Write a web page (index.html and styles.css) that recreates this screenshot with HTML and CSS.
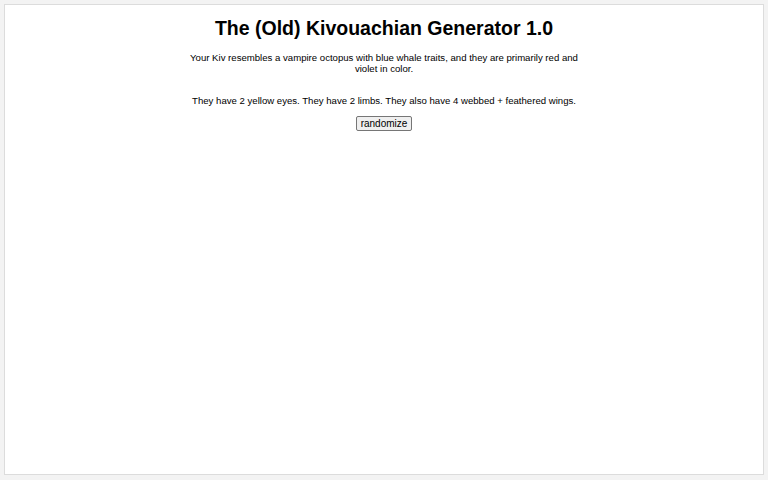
FILE: index.html
```html
<!DOCTYPE html>
<html>
<head>
<meta charset="utf-8">
<link rel="stylesheet" href="styles.css">
</head>
<body>
<div class="panel">
  <h1 class="title">The (Old) Kivouachian Generator 1.0</h1>
  <div class="content">
    <p class="desc">Your Kiv resembles a vampire octopus with blue whale traits, and they are primarily red and violet in color.</p>
    <p class="desc second">They have 2 yellow eyes. They have 2 limbs. They also have 4 webbed + feathered wings.</p>
    <button class="btn">randomize</button>
  </div>
</div>
</body>
</html>
```
FILE: styles.css
```css
html, body {
  margin: 0;
  padding: 0;
}
body {
  background: #f3f3f3;
  padding: 4px 4px 5px 4px;
  font-family: "Liberation Sans", Arial, sans-serif;
  color: #000;
}
.panel {
  background: #fff;
  border: 1px solid #dcdcdc;
  height: 471px;
  box-sizing: border-box;
  text-align: center;
}
.title {
  font-size: 19.5px;
  font-weight: bold;
  margin: 0;
  padding-top: 12px;
  line-height: 23px;
}
.content {
  width: 400px;
  margin: 0 auto;
}
.desc {
  font-size: 9.6px;
  line-height: 11px;
  margin: 12px 0 0 0;
}
.desc.second {
  margin-top: 21px;
}
.btn {
  font-family: "Liberation Sans", Arial, sans-serif;
  font-size: 10px;
  margin-top: 10px;
  padding: 1px 4px;
  background: #efefef;
  border: 1px solid #767676;
  border-radius: 2px;
  color: #000;
}
```
